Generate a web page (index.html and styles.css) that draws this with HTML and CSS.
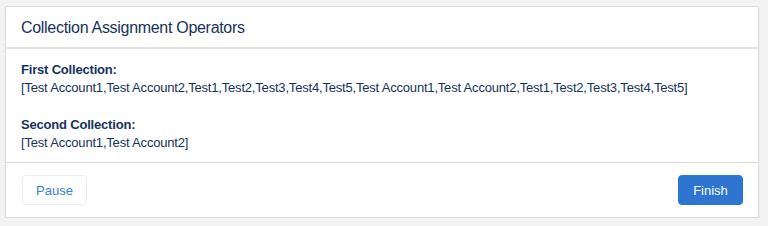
FILE: index.html
```html
<!DOCTYPE html>
<html>
<head>
    <meta charset="UTF-8">
    <title>Collection Assignment Operators</title>
    <link rel="stylesheet" href="styles.css">
</head>
<body>
    <div class="card">
        <div class="card-header">Collection Assignment Operators</div>
        <div class="card-body">
            <div class="field">
                <b>First Collection:</b>
                <span>[Test Account1,Test Account2,Test1,Test2,Test3,Test4,Test5,Test Account1,Test Account2,Test1,Test2,Test3,Test4,Test5]</span>
            </div>
            <div class="field">
                <b>Second Collection:</b>
                <span>[Test Account1,Test Account2]</span>
            </div>
        </div>
        <div class="card-footer">
            <button class="btn btn-neutral">Pause</button>
            <button class="btn btn-brand">Finish</button>
        </div>
    </div>
</body>
</html>
```

FILE: styles.css
```css
* {
    margin: 0;
    padding: 0;
    box-sizing: border-box;
}
body{
    background: #f3f3f3;
    padding: 6px 9px 0 5px;
    font-family: "Liberation Sans", Arial, sans-serif;
    color: #16325c;
    overflow: hidden;
}
.card{
    background: #fff;
    border: 1px solid #dddbda;
    border-radius: 2px;
    box-shadow: 0 2px 2px rgba(0,0,0,.08);
}
.card-header{
    height: 42px;
    line-height: 41px;
    padding: 0 15px;
    font-size: 16px;
    letter-spacing: -0.3px;
    border-bottom: 2px solid #e4e4e4;
}
.card-body{
    padding: 12px 15px 10px;
    font-size: 13px;
    line-height: 18px;
    letter-spacing: -0.19px;
}
.field{margin-bottom:19px;}
.field:last-child{margin-bottom:0;}
.field b{display:block;font-weight:700;}
.field span{display:block;}
.card-footer{
    display: flex;
    justify-content: space-between;
    padding: 12px 15px 12px 16px;
    border-top: 1px solid #dddbda;
}
.btn{
    width: 65px;
    height: 30px;
    font-family: "Liberation Sans", Arial, sans-serif;
    font-size: 13px;
    text-align: center;
    border-radius: 4px;
    cursor: pointer;
}
.btn-neutral{
    background: #fff;
    border: 1px solid #ececec;
    color: #3a7fd8;
}
.btn-brand{
    background: #2e74d1;
    border: 1px solid #2e74d1;
    color: #fff;
}
```
